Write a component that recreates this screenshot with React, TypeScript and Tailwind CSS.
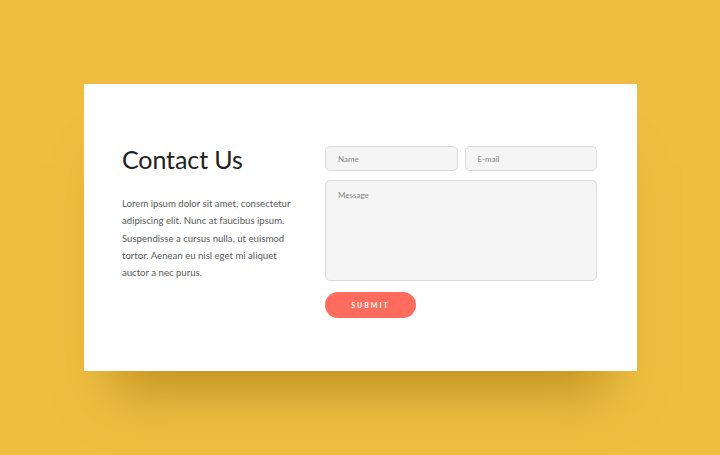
import React from "react";

export default function App() {
  const font = { fontFamily: "Lato, 'Noto Sans', sans-serif" };
  return (
    <div className="w-[720px] h-[455px] bg-[#efbe41] overflow-hidden pt-[84px] pl-[84px]" style={font}>
      <div className="w-[553px] h-[287px] bg-white shadow-[0_50px_50px_-30px_rgba(150,100,0,0.5)] flex pl-[38px] pr-[40px] pt-[62px]">
        <div className="w-[203px] shrink-0 pr-[30px] -mt-[2px]">
          <h1 className="text-[25px] leading-[30px] text-[#222] tracking-[-0.1px]">Contact Us</h1>
          <p className="mt-[21px] text-[9.6px] leading-[17.3px] text-[#5a5a5a]">
            Lorem ipsum dolor sit amet, consectetur adipiscing elit. Nunc at faucibus ipsum. Suspendisse a cursus nulla, ut euismod tortor. Aenean eu nisl eget mi aliquet auctor a nec purus.
          </p>
        </div>
        <div className="flex-1 flex flex-col">
          <div className="flex gap-[7px]">
            <div className="flex-1 h-[25px] bg-[#f5f5f5] border border-[#dcdcdc] rounded-[5px] px-[12px] flex items-center text-[8px] text-[#888]">Name</div>
            <div className="flex-1 h-[25px] bg-[#f5f5f5] border border-[#dcdcdc] rounded-[5px] px-[12px] flex items-center text-[8px] text-[#888]">E-mail</div>
          </div>
          <div className="mt-[9px] h-[101px] bg-[#f5f5f5] border border-[#dcdcdc] rounded-[5px] px-[12px] pt-[8px] text-[8px] text-[#888]">Message</div>
          <div className="mt-[11px] w-[91px] h-[26px] rounded-full bg-[#ff6b5c] flex items-center justify-center text-white text-[7px] font-bold tracking-[2px]">SUBMIT</div>
        </div>
      </div>
    </div>
  );
}
